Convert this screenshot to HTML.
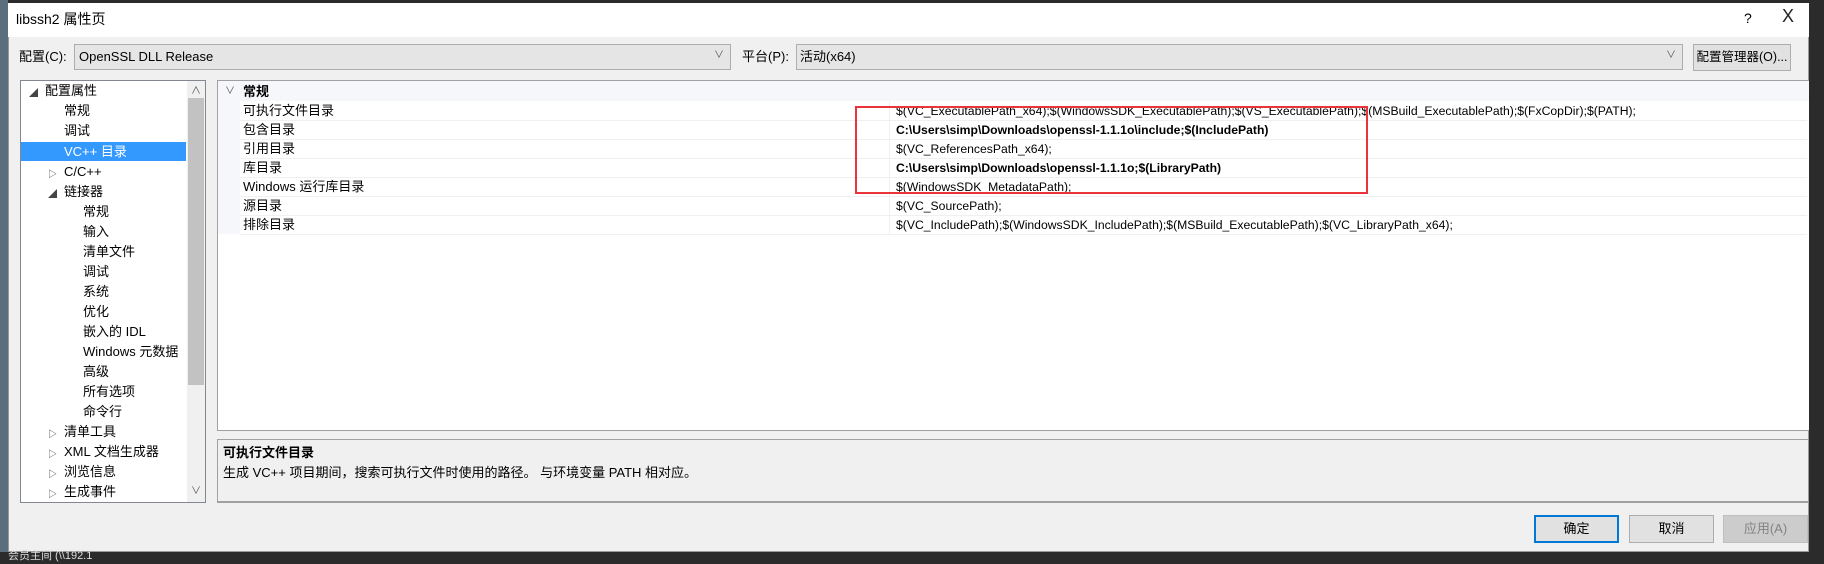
<!DOCTYPE html><html><head><meta charset="utf-8"><style>
*{margin:0;padding:0;box-sizing:border-box}
body{width:1824px;height:561px;overflow:hidden;background:#2b2b2b;font-family:"Liberation Sans","Noto Sans CJK SC",sans-serif;font-size:13px;color:#000;position:relative}
.abs{position:absolute}
.t{position:absolute;white-space:nowrap;line-height:16px}
.v{font-size:12.2px}
#dlg{left:8px;top:3px;width:1801px;height:549px;background:#f0f0f0;border:1px solid #999}
#title{left:8px;top:3px;width:1801px;height:34px;background:#fff}
.combo{background:#e5e5e5;border:1px solid #adadad}
.btn{background:#e1e1e1;border:1px solid #adadad;text-align:center;line-height:25px}
.tree{background:#fff;border:1px solid #828790}
.row{position:absolute;left:0;height:19px;line-height:19px;white-space:nowrap}
.tri{position:absolute;font-size:9px;color:#444}
.gl{position:absolute;left:240px;width:1567px;height:1px;background:#f0f0f0}
</style></head><body>
<div class="abs" style="left:0;top:0;width:8px;height:561px;background:#5a6e7e"></div>
<div class="abs" id="dlg"></div>
<div class="abs" id="title"></div>
<div class="t" style="left:16px;top:11px;font-size:14px">libssh2 属性页</div>
<div class="t" style="left:1744px;top:10px;font-size:14px">?</div>
<div class="t" style="left:1782px;top:8px;font-size:18px;font-weight:normal;color:#222">X</div>

<div class="t" style="left:19px;top:49px">配置(C):</div>
<div class="abs combo" style="left:74px;top:44px;width:657px;height:26px"></div>
<div class="t" style="left:79px;top:49px">OpenSSL DLL Release</div>
<div class="t" style="left:714px;top:48px;font-size:10px;color:#555">∨</div>
<div class="t" style="left:742px;top:49px">平台(P):</div>
<div class="abs combo" style="left:796px;top:44px;width:887px;height:26px"></div>
<div class="t" style="left:800px;top:49px">活动(x64)</div>
<div class="t" style="left:1666px;top:48px;font-size:10px;color:#555">∨</div>
<div class="abs btn" style="left:1693px;top:44px;width:98px;height:27px;font-size:12.5px">配置管理器(O)...</div>

<div class="abs tree" style="left:20px;top:80px;width:186px;height:423px"></div>
<div class="abs" style="left:187px;top:81px;width:18px;height:421px;background:#f0f0f0"></div>
<div class="abs" style="left:188px;top:98px;width:16px;height:287px;background:#c2c2c2"></div>
<div class="t" style="left:191px;top:84px;font-size:10px;color:#555">∧</div>
<div class="t" style="left:191px;top:484px;font-size:10px;color:#555">∨</div>
<div class="abs" style="left:21px;top:142px;width:165px;height:19px;background:#3399ff"></div>
<div class="abs" style="left:21px;top:81px;width:165px;height:420px">
<div class="tri" style="left:8px;top:5px">◢</div><div class="row" style="left:24px;top:0">配置属性</div>
<div class="row" style="left:43px;top:20px">常规</div>
<div class="row" style="left:43px;top:40px">调试</div>
<div class="row" style="left:43px;top:61px;color:#fff">VC++ 目录</div>
<div class="tri" style="left:27px;top:86px">▷</div><div class="row" style="left:43px;top:81px">C/C++</div>
<div class="tri" style="left:27px;top:106px">◢</div><div class="row" style="left:43px;top:101px">链接器</div>
<div class="row" style="left:62px;top:121px">常规</div>
<div class="row" style="left:62px;top:141px">输入</div>
<div class="row" style="left:62px;top:161px">清单文件</div>
<div class="row" style="left:62px;top:181px">调试</div>
<div class="row" style="left:62px;top:201px">系统</div>
<div class="row" style="left:62px;top:221px">优化</div>
<div class="row" style="left:62px;top:241px">嵌入的 IDL</div>
<div class="row" style="left:62px;top:261px">Windows 元数据</div>
<div class="row" style="left:62px;top:281px">高级</div>
<div class="row" style="left:62px;top:301px">所有选项</div>
<div class="row" style="left:62px;top:321px">命令行</div>
<div class="tri" style="left:27px;top:346px">▷</div><div class="row" style="left:43px;top:341px">清单工具</div>
<div class="tri" style="left:27px;top:366px">▷</div><div class="row" style="left:43px;top:361px">XML 文档生成器</div>
<div class="tri" style="left:27px;top:386px">▷</div><div class="row" style="left:43px;top:381px">浏览信息</div>
<div class="tri" style="left:27px;top:406px">▷</div><div class="row" style="left:43px;top:401px">生成事件</div>
</div>

<div class="abs" style="left:217px;top:80px;width:1592px;height:351px;background:#fff;border:1px solid #a0a0a0;border-right:none"></div>
<div class="abs" style="left:218px;top:81px;width:1591px;height:20px;background:#f5f7fa"></div>
<div class="abs" style="left:218px;top:101px;width:22px;height:133px;background:#f5f7fa"></div>
<div class="t" style="left:225px;top:84px;font-size:10px;color:#555">∨</div>
<div class="t" style="left:243px;top:84px;font-weight:bold">常规</div>
<div class="abs" style="left:889px;top:101px;width:1px;height:133px;background:#f0f0f0"></div>
<div class="gl" style="top:120px"></div><div class="gl" style="top:139px"></div><div class="gl" style="top:158px"></div><div class="gl" style="top:177px"></div><div class="gl" style="top:196px"></div><div class="gl" style="top:215px"></div><div class="gl" style="top:234px"></div>
<div class="t" style="left:243px;top:103px">可执行文件目录</div>
<div class="t" style="left:243px;top:122px">包含目录</div>
<div class="t" style="left:243px;top:141px">引用目录</div>
<div class="t" style="left:243px;top:160px">库目录</div>
<div class="t" style="left:243px;top:179px">Windows 运行库目录</div>
<div class="t" style="left:243px;top:198px">源目录</div>
<div class="t" style="left:243px;top:217px">排除目录</div>
<div class="t v" style="left:896px;top:103px">$(VC_ExecutablePath_x64);$(WindowsSDK_ExecutablePath);$(VS_ExecutablePath);$(MSBuild_ExecutablePath);$(FxCopDir);$(PATH);</div>
<div class="t v" style="left:896px;top:122px;font-weight:bold">C:\Users\simp\Downloads\openssl-1.1.1o\include;$(IncludePath)</div>
<div class="t v" style="left:896px;top:141px">$(VC_ReferencesPath_x64);</div>
<div class="t v" style="left:896px;top:160px;font-weight:bold">C:\Users\simp\Downloads\openssl-1.1.1o;$(LibraryPath)</div>
<div class="t v" style="left:896px;top:179px">$(WindowsSDK_MetadataPath);</div>
<div class="t v" style="left:896px;top:198px">$(VC_SourcePath);</div>
<div class="t v" style="left:896px;top:217px">$(VC_IncludePath);$(WindowsSDK_IncludePath);$(MSBuild_ExecutablePath);$(VC_LibraryPath_x64);</div>
<div class="abs" style="left:855px;top:106px;width:513px;height:88px;border:2px solid #e8343a"></div>

<div class="abs" style="left:217px;top:439px;width:1592px;height:64px;border:1px solid #a0a0a0;border-bottom:2px solid #a0a0a0;border-right:none"></div>
<div class="t" style="left:223px;top:445px;font-weight:bold">可执行文件目录</div>
<div class="t" style="left:223px;top:465px">生成 VC++ 项目期间，搜索可执行文件时使用的路径。 与环境变量 PATH 相对应。</div>

<div class="abs btn" style="left:1534px;top:515px;width:85px;height:28px;border:2px solid #0078d7;line-height:24px">确定</div>
<div class="abs btn" style="left:1629px;top:515px;width:85px;height:28px">取消</div>
<div class="abs btn" style="left:1723px;top:515px;width:85px;height:28px;background:#ccc;border-color:#bfbfbf;color:#838383">应用(A)</div>
<div class="abs" style="left:0;top:552px;width:1824px;height:9px;background:#2b2b2b"></div>
<div class="t" style="left:8px;top:548px;font-size:11px;color:#ddd">会员主间 (\\192.1</div>
</body></html>
